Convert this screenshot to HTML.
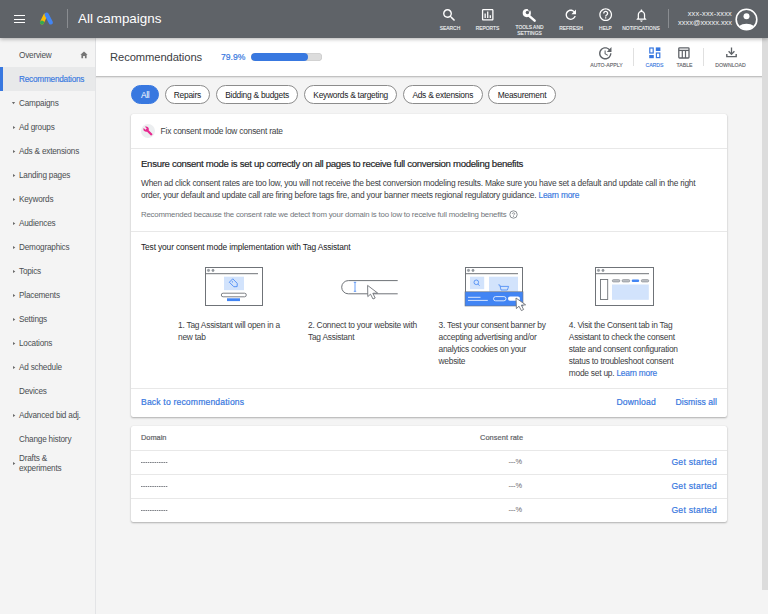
<!DOCTYPE html>
<html><head><meta charset="utf-8">
<style>
*{box-sizing:border-box;margin:0;padding:0}
html,body{width:768px;height:614px;overflow:hidden;background:#f4f4f4;font-family:"Liberation Sans",sans-serif;color:#3c4043}
.a{position:absolute;white-space:nowrap}
#hdr{position:absolute;left:0;top:0;width:768px;height:38px;background:#5f6368;z-index:5;box-shadow:0 1px 4px rgba(0,0,0,.32)}
#side{position:absolute;left:0;top:38px;width:96px;height:576px;background:#f4f4f4;border-right:1px solid #e3e4e6}
.si{position:absolute;left:19px;font-size:8.2px;letter-spacing:-0.2px;color:#4a4e52;line-height:10px;margin-top:0.8px}
.arr{position:absolute;left:12px;width:0;height:0;border-top:1.9px solid transparent;border-bottom:1.9px solid transparent;border-left:2.3px solid #6a6a6a;margin-top:0.5px}
#sub{position:absolute;left:96px;top:38px;width:666px;height:38.6px;background:#fff;border-bottom:1px solid #c2c2c2;box-shadow:0 1px 1px rgba(0,0,0,.07)}
#scroll{position:absolute;left:762px;top:38px;width:6px;height:552px;background:#dcdcdc}
.lbl{position:absolute;font-size:4.9px;font-weight:400;color:#f1f3f4;text-align:center;letter-spacing:0px;-webkit-text-stroke:0.12px currentColor}
.chip{position:absolute;top:85px;height:19px;border:1px solid #8c8c8c;border-radius:10px;font-size:8.4px;letter-spacing:-0.25px;line-height:18px;text-align:center;color:#202124;background:#fff}
.card{position:absolute;left:131px;width:596px;background:#fff;border-radius:2px;box-shadow:0 1px 2px rgba(0,0,0,.28),0 0 1px rgba(0,0,0,.12)}
.hr{position:absolute;left:0;width:596px;height:1px;background:#e8e8e8}
.t84{font-size:8.4px;color:#3c4043}
.blue{color:#1a73e8}
</style></head><body>
<div id="hdr">
 <!-- hamburger -->
 <div class="a" style="left:14px;top:15.2px;width:11px;height:1.3px;background:#fff"></div>
 <div class="a" style="left:14px;top:18.6px;width:11px;height:1.3px;background:#fff"></div>
 <div class="a" style="left:14px;top:22px;width:11px;height:1.3px;background:#fff"></div>
 <!-- logo -->
 <svg class="a" style="left:38px;top:11px" width="17" height="16" viewBox="0 0 17 16">
  <line x1="7.2" y1="4.6" x2="4" y2="11.4" stroke="#fbbc04" stroke-width="4" stroke-linecap="round"/>
  <circle cx="4" cy="11.6" r="2.1" fill="#34a853"/>
  <line x1="8.6" y1="3.6" x2="12.8" y2="11.4" stroke="#4285f4" stroke-width="4.2" stroke-linecap="round"/>
 </svg>
 <div class="a" style="left:67px;top:9px;width:1px;height:19px;background:#8a8d91"></div>
 <div class="a" style="left:78px;top:10px;font-size:13.4px;color:#fff;line-height:18px">All campaigns</div>
 <!-- search -->
 <svg class="a" style="left:441.40px;top:7.44px" width="16.46" height="16.46" viewBox="0 0 24 24"><path d="M15.5 14h-.79l-.28-.27C15.41 12.59 16 11.11 16 9.5 16 5.91 13.09 3 9.5 3S3 5.910 3 9.5 5.91 16 9.5 16c1.61 0 3.09-.59 4.23-1.57l.27.28v.79l5 4.99L20.49 19l-4.99-5zm-6 0C7.01 14 5 11.990 5 9.5S7.01 5 9.5 5 14 7.01 14 9.5 11.99 14 9.5 14z" fill="#fff"/></svg>
 <div class="lbl" style="left:436px;top:25.5px;width:28px">SEARCH</div>
 <!-- reports -->
 <svg class="a" style="left:479.90px;top:7.20px" width="15.46" height="15.46" viewBox="0 0 24 24"><path d="M19 3H5c-1.1 0-2 .9-2 2v14c0 1.1.9 2 2 2h14c1.1 0 2-.9 2-2V5c0-1.1-.9-2-2-2zm0 16H5V5h14v14zM7 10h2v7H7zm4-3h2v10h-2zm4 6h2v4h-2z" fill="#fff"/></svg>
 <div class="lbl" style="left:473px;top:25.5px;width:29px">REPORTS</div>
 <!-- tools -->
 <svg class="a" style="left:518px;top:5px" width="24" height="20" viewBox="0 0 24 20"><line x1="10.6" y1="10.4" x2="16.6" y2="15.6" stroke="#fff" stroke-width="2.5" stroke-linecap="round"/><circle cx="8.8" cy="8.1" r="4.1" fill="#fff"/><circle cx="9.4" cy="7.5" r="1.7" fill="#5f6368"/><path d="M9.6 3.4 L12.6 3.8 L11.2 7 Z" fill="#5f6368"/></svg>
 <div class="lbl" style="left:512px;top:24.6px;width:35px;line-height:6px">TOOLS AND<br>SETTINGS</div>
 <!-- refresh -->
 <svg class="a" style="left:563.20px;top:7.20px" width="15.60" height="15.60" viewBox="0 0 24 24"><path d="M17.65 6.35C16.2 4.9 14.21 4 12 4c-4.42 0-7.99 3.58-7.99 8s3.57 8 7.99 8c3.730 0 6.84-2.55 7.73-6h-2.08c-.82 2.33-3.04 4-5.65 4-3.31 0-6-2.69-6-6s2.69-6 6-6c1.66 0 3.14.69 4.22 1.78L13 11h7V4l-2.35 2.35z" fill="#fff"/></svg>
 <div class="lbl" style="left:557px;top:25.5px;width:28px">REFRESH</div>
 <!-- help -->
 <svg class="a" style="left:597.80px;top:7.20px" width="15.36" height="15.36" viewBox="0 0 24 24"><path d="M11 18h2v-2h-2v2zm1-16C6.48 2 2 6.48 2 12s4.48 10 10 10 10-4.48 10-10S17.52 2 12 2zm0 18c-4.41 0-8-3.59-8-8s3.59-8 8-8 8 3.59 8 8-3.59 8-8 8zm0-14c-2.21 0-4 1.79-4 4h2c0-1.1.9-2 2-2s2 .9 2 2c0 2-3 1.75-3 5h2c0-2.25 3-2.5 3-5 0-2.21-1.79-4-4-4z" fill="#fff"/></svg>
 <div class="lbl" style="left:595px;top:25.5px;width:21px">HELP</div>
 <!-- bell -->
 <svg class="a" style="left:633.70px;top:7.55px" width="14.88" height="14.88" viewBox="0 0 24 24"><path d="M12 22c1.1 0 2-.9 2-2h-4c0 1.1.89 2 2 2zm6-6v-5c0-3.07-1.64-5.64-4.5-6.32V4c0-.83-.67-1.5-1.5-1.5s-1.5.67-1.5 1.5v.68C7.63 5.36 6 7.920 6 11v5l-2 2v1h16v-1l-2-2zm-2 1H8v-6c0-2.48 1.51-4.5 4-4.5s4 2.02 4 4.5v6z" fill="#fff"/></svg>
 <div class="lbl" style="left:620px;top:25.5px;width:42px">NOTIFICATIONS</div>
 <div class="a" style="left:668px;top:9px;width:1px;height:19px;background:#8a8d91"></div>
 <div class="a" style="left:662px;top:8.6px;width:70px;text-align:right;font-size:7.4px;line-height:9.5px;color:#f1f3f4"><span style="letter-spacing:0.2px">xxx-xxx-xxxx</span><br>xxxx@xxxxx.xxx</div>
 <!-- avatar -->
 <svg class="a" style="left:735px;top:7.5px" width="23" height="23" viewBox="0 0 23 23"><defs><clipPath id="cc"><circle cx="11.5" cy="11.5" r="9.8"/></clipPath></defs><circle cx="11.5" cy="11.5" r="10.3" fill="none" stroke="#fff" stroke-width="1.6"/><circle cx="11.5" cy="8.2" r="3" fill="#fff"/><ellipse cx="11.5" cy="23" rx="10.5" ry="7.2" fill="#fff" clip-path="url(#cc)"/></svg>
</div>
<div id="side">
 <div class="a" style="left:0;top:28.7px;width:95px;height:24.3px;background:#e8e9ea"></div>
 <div class="a" style="left:0;top:28.7px;width:2.5px;height:24.3px;background:#3878e0"></div>
 <div class="si" style="top:12px;color:#4a4e52">Overview</div>
 <div class="si" style="top:36px;color:#3878e0;-webkit-text-stroke:0.15px currentColor">Recommendations</div>
 <div class="si" style="top:60px;color:#4a4e52">Campaigns</div>
 <svg class="a" style="left:10.5px;top:63px" width="5" height="4" viewBox="0 0 5 4"><path d="M0.9 1 L4.1 1 L2.5 3.3 Z" fill="#6a6a6a"/></svg>
 <div class="si" style="top:84px;color:#4a4e52">Ad groups</div>
 <svg class="a" style="left:11.5px;top:87.0px" width="4" height="5" viewBox="0 0 4 5"><path d="M1 0.9 L3.3 2.5 L1 4.1 Z" fill="#6a6a6a"/></svg>
 <div class="si" style="top:108px;color:#4a4e52">Ads &amp; extensions</div>
 <svg class="a" style="left:11.5px;top:111.0px" width="4" height="5" viewBox="0 0 4 5"><path d="M1 0.9 L3.3 2.5 L1 4.1 Z" fill="#6a6a6a"/></svg>
 <div class="si" style="top:132px;color:#4a4e52">Landing pages</div>
 <svg class="a" style="left:11.5px;top:135.0px" width="4" height="5" viewBox="0 0 4 5"><path d="M1 0.9 L3.3 2.5 L1 4.1 Z" fill="#6a6a6a"/></svg>
 <div class="si" style="top:156px;color:#4a4e52">Keywords</div>
 <svg class="a" style="left:11.5px;top:159.0px" width="4" height="5" viewBox="0 0 4 5"><path d="M1 0.9 L3.3 2.5 L1 4.1 Z" fill="#6a6a6a"/></svg>
 <div class="si" style="top:180px;color:#4a4e52">Audiences</div>
 <svg class="a" style="left:11.5px;top:183.0px" width="4" height="5" viewBox="0 0 4 5"><path d="M1 0.9 L3.3 2.5 L1 4.1 Z" fill="#6a6a6a"/></svg>
 <div class="si" style="top:204px;color:#4a4e52">Demographics</div>
 <svg class="a" style="left:11.5px;top:207.0px" width="4" height="5" viewBox="0 0 4 5"><path d="M1 0.9 L3.3 2.5 L1 4.1 Z" fill="#6a6a6a"/></svg>
 <div class="si" style="top:228px;color:#4a4e52">Topics</div>
 <svg class="a" style="left:11.5px;top:231.0px" width="4" height="5" viewBox="0 0 4 5"><path d="M1 0.9 L3.3 2.5 L1 4.1 Z" fill="#6a6a6a"/></svg>
 <div class="si" style="top:252px;color:#4a4e52">Placements</div>
 <svg class="a" style="left:11.5px;top:255.0px" width="4" height="5" viewBox="0 0 4 5"><path d="M1 0.9 L3.3 2.5 L1 4.1 Z" fill="#6a6a6a"/></svg>
 <div class="si" style="top:276px;color:#4a4e52">Settings</div>
 <svg class="a" style="left:11.5px;top:279.0px" width="4" height="5" viewBox="0 0 4 5"><path d="M1 0.9 L3.3 2.5 L1 4.1 Z" fill="#6a6a6a"/></svg>
 <div class="si" style="top:300px;color:#4a4e52">Locations</div>
 <svg class="a" style="left:11.5px;top:303.0px" width="4" height="5" viewBox="0 0 4 5"><path d="M1 0.9 L3.3 2.5 L1 4.1 Z" fill="#6a6a6a"/></svg>
 <div class="si" style="top:324px;color:#4a4e52">Ad schedule</div>
 <svg class="a" style="left:11.5px;top:327.0px" width="4" height="5" viewBox="0 0 4 5"><path d="M1 0.9 L3.3 2.5 L1 4.1 Z" fill="#6a6a6a"/></svg>
 <div class="si" style="top:348px;color:#4a4e52">Devices</div>
 <div class="si" style="top:372px;color:#4a4e52">Advanced bid adj.</div>
 <svg class="a" style="left:11.5px;top:375.0px" width="4" height="5" viewBox="0 0 4 5"><path d="M1 0.9 L3.3 2.5 L1 4.1 Z" fill="#6a6a6a"/></svg>
 <div class="si" style="top:396px;color:#4a4e52">Change history</div>
 <div class="si" style="top:415px">Drafts &amp;<br>experiments</div>
 <svg class="a" style="left:11.5px;top:423.0px" width="4" height="5" viewBox="0 0 4 5"><path d="M1 0.9 L3.3 2.5 L1 4.1 Z" fill="#6a6a6a"/></svg>
 <svg class="a" style="left:80px;top:13px" width="8" height="8" viewBox="0 0 8 8"><path d="M4 0.6 L7.6 3.8 L6.6 3.8 L6.6 7.2 L4.9 7.2 L4.9 5 L3.1 5 L3.1 7.2 L1.4 7.2 L1.4 3.8 L0.4 3.8 Z" fill="#757575"/></svg>
</div>
<div id="sub">
 <div class="a" style="left:14px;top:12px;font-size:11.2px;line-height:14px;color:#3c4043;letter-spacing:-0.08px">Recommendations</div>
 <div class="a" style="left:125px;top:13.7px;font-size:8.6px;line-height:10px;color:#3878e0;font-weight:400;letter-spacing:0px;-webkit-text-stroke:0.2px currentColor;">79.9%</div>
 <div class="a" style="left:154.5px;top:15px;width:71px;height:8px;border-radius:4px;background:#dcdcdc;box-shadow:inset 0 0 0 0.6px #c8c8c8;overflow:hidden"><div style="width:57px;height:8px;background:#3878e0;border-radius:4px"></div></div>
 <!-- auto-apply -->
 <svg class="a" style="left:501.40px;top:6.90px" width="16.56" height="16.56" viewBox="0 0 24 24"><path d="M21 10.12h-6.78l2.74-2.82c-2.73-2.7-7.15-2.8-9.88-.1-2.73 2.71-2.73 7.08 0 9.79s7.15 2.71 9.88 0C18.32 15.65 19 14.08 19 12.1h2c0 1.98-.88 4.55-2.64 6.29-3.51 3.48-9.21 3.48-12.72 0-3.5-3.47-3.53-9.11-.02-12.58s9.14-3.47 12.65 0L21 3v7.12zM12.5 8v4.25l3.5 2.08-.72 1.21L11 13V8h1.5z" fill="#5f6368"/></svg>
 <div class="lbl" style="left:492px;top:23.8px;width:37px;color:#5f6368;font-weight:400;font-size:5.2px">AUTO-APPLY</div>
 <div class="a" style="left:537px;top:9.5px;width:1px;height:18.5px;background:#e0e0e0"></div>
 <!-- cards -->
 <svg class="a" style="left:552.5px;top:9px" width="12" height="12" viewBox="0 0 12 12" fill="#3878e0"><rect x="0.2" y="0.4" width="4.6" height="6.2"/><rect x="6.8" y="0.4" width="4.6" height="3.6"/><rect x="0.2" y="8" width="4.6" height="3.2"/><rect x="6.8" y="5.4" width="4.6" height="5.8"/><rect x="1.4" y="1.6" width="2.2" height="3.8" fill="#fff"/><rect x="8" y="6.6" width="2.2" height="3.4" fill="#fff"/></svg>
 <div class="lbl" style="left:547px;top:23.8px;width:23px;color:#3878e0;font-weight:400;font-size:5.2px">CARDS</div>
 <!-- table -->
 <svg class="a" style="left:582px;top:9px" width="12" height="12" viewBox="0 0 12 12"><rect x="0.8" y="0.8" width="10.2" height="10.2" rx="0.8" fill="none" stroke="#5f6368" stroke-width="1.3"/><line x1="0.8" y1="3.4" x2="11" y2="3.4" stroke="#5f6368" stroke-width="1.3"/><line x1="4.3" y1="3.4" x2="4.3" y2="11" stroke="#5f6368" stroke-width="1.2"/><line x1="7.5" y1="3.4" x2="7.5" y2="11" stroke="#5f6368" stroke-width="1.2"/></svg>
 <div class="lbl" style="left:578px;top:23.8px;width:21px;color:#5f6368;font-weight:400;font-size:5.2px">TABLE</div>
 <div class="a" style="left:607px;top:9.5px;width:1px;height:18.5px;background:#e0e0e0"></div>
 <!-- download -->
 <svg class="a" style="left:629.5px;top:9px" width="11" height="11" viewBox="0 0 11 11"><line x1="5.5" y1="0.5" x2="5.5" y2="6.6" stroke="#5f6368" stroke-width="1.3"/><path d="M2.6 4.2 L5.5 7.2 L8.4 4.2" fill="none" stroke="#5f6368" stroke-width="1.3"/><path d="M0.8 7 L0.8 9.6 L10.2 9.6 L10.2 7" fill="none" stroke="#5f6368" stroke-width="1.4"/></svg>
 <div class="lbl" style="left:617px;top:23.8px;width:35px;color:#5f6368;font-weight:400;font-size:5.2px">DOWNLOAD</div>
</div>
<div id="scroll"></div>
<div class="chip" style="left:131px;width:28.4px;background:#3878e0;border-color:#3878e0;color:#fff">All</div>
<div class="chip" style="left:164.75px;width:45.25px">Repairs</div>
<div class="chip" style="left:215.7px;width:82.8px">Bidding &amp; budgets</div>
<div class="chip" style="left:304px;width:93.3px">Keywords &amp; targeting</div>
<div class="chip" style="left:402.8px;width:79.9px">Ads &amp; extensions</div>
<div class="chip" style="left:488px;width:68px">Measurement</div>
<div class="card" style="top:114px;height:303px">
 <svg class="a" style="left:10px;top:9.8px" width="14" height="14" viewBox="0 0 14 14"><circle cx="7" cy="7" r="7" fill="#eceef0"/></svg><svg class="a" style="left:12.4px;top:11.6px" width="10" height="10" viewBox="0 0 24 24"><path d="M22.7 19l-9.1-9.1c.9-2.3.4-5-1.5-6.9-2-2-5-2.4-7.4-1.3L9 6 6 9 1.6 4.7C.4 7.1.9 10.1 2.9 12.1c1.9 1.9 4.6 2.4 6.9 1.5l9.1 9.1c.4.4 1 .4 1.4 0l2.3-2.3c.5-.4.5-1.1.1-1.4z" fill="#e8288f"/></svg>
 <div class="a" style="left:29.6px;top:11.0px;font-size:8.4px;line-height:12px;color:#3c4043;font-weight:400;letter-spacing:-0.22px;">Fix consent mode low consent rate</div>
 <div class="hr" style="top:34px"></div>
 <div class="a" style="left:10px;top:43.5px;font-size:9.6px;line-height:12px;color:#202124;font-weight:400;letter-spacing:-0.30px;-webkit-text-stroke:0.16px currentColor;">Ensure consent mode is set up correctly on all pages to receive full conversion modeling benefits</div>
 <div class="a" style="left:10px;top:63.0px;font-size:8.4px;line-height:12px;color:#3c4043;font-weight:400;letter-spacing:-0.22px;">When ad click consent rates are too low, you will not receive the best conversion modeling results. Make sure you have set a default and update call in the right</div>
 <div class="a" style="left:10px;top:75.0px;font-size:8.4px;line-height:12px;color:#3c4043;font-weight:400;letter-spacing:-0.22px;">order, your default and update call are firing before tags fire, and your banner meets regional regulatory guidance. <span style="color:#3878e0;-webkit-text-stroke:0.15px currentColor">Learn more</span></div>
 <div class="a" style="left:10px;top:95.6px;font-size:7.8px;line-height:10px;color:#70757a;font-weight:400;letter-spacing:-0.2px;">Recommended because the consent rate we detect from your domain is too low to receive full modeling benefits</div>
 <svg class="a" style="left:377.5px;top:96px" width="9" height="9" viewBox="0 0 9 9"><circle cx="4.5" cy="4.5" r="3.7" fill="none" stroke="#70757a" stroke-width="0.8"/><path d="M3.3 3.7 C3.3 2.5 5.7 2.5 5.7 3.7 C5.7 4.6 4.5 4.5 4.5 5.5" fill="none" stroke="#70757a" stroke-width="0.8"/><rect x="4.1" y="6" width="0.8" height="0.8" fill="#70757a"/></svg>
 <div class="hr" style="top:117px"></div>
 <div class="a" style="left:10px;top:127.2px;font-size:8.4px;line-height:12px;color:#202124;font-weight:400;letter-spacing:-0.13px;">Test your consent mode implementation with Tag Assistant</div>
<svg class="a" style="left:0;top:0" width="596" height="303" viewBox="131 114 596 303"><rect x="205.5" y="267.5" width="57" height="38" fill="#fff" stroke="#6f7378" stroke-width="1"/><circle cx="208.5" cy="270.4" r="1.15" fill="#9aa0a6" stroke="#70757a" stroke-width="0.5"/><circle cx="213" cy="270.4" r="1.15" fill="#9aa0a6" stroke="#70757a" stroke-width="0.5"/><line x1="205" y1="273.7" x2="258" y2="273.7" stroke="#6f7378" stroke-width="1"/><rect x="224" y="276.7" width="20" height="13.5" fill="#d2e3fc"/><g transform="translate(234,283.5) rotate(-45)"><path d="M-2.4 -4.2 L2.4 -4.2 L2.4 2.2 L0 4.4 L-2.4 2.2 Z" fill="none" stroke="#4285f4" stroke-width="0.8"/><circle cx="0" cy="-2.3" r="0.6" fill="#4285f4"/></g><rect x="221.3" y="293.2" width="25" height="3.6" rx="1.8" fill="none" stroke="#6f7378" stroke-width="0.9"/><rect x="227" y="298.3" width="13" height="2.8" fill="#4285f4"/><path d="M397.7 280.6 L348.3 280.6 A6.6 6.6 0 0 0 348.3 293.8 L397.7 293.8" fill="none" stroke="#6f7378" stroke-width="1"/><path d="M353.8 282.3 L356.2 282.3 M355 282.3 L355 291.3 M353.8 291.3 L356.2 291.3" fill="none" stroke="#4285f4" stroke-width="0.8"/><path d="M367.6 285.4 L367.8 296.6 L370.5 294.2 L373 299 L375.2 298 L372.8 293.3 L377.6 293 Z" fill="#fff" stroke="#6f7378" stroke-width="0.9" stroke-linejoin="round"/><rect x="465.5" y="267.5" width="57" height="38" fill="#fff" stroke="#6f7378" stroke-width="1"/><circle cx="468.5" cy="270.4" r="1.15" fill="#9aa0a6" stroke="#70757a" stroke-width="0.5"/><circle cx="473" cy="270.4" r="1.15" fill="#9aa0a6" stroke="#70757a" stroke-width="0.5"/><line x1="465" y1="273.7" x2="518" y2="273.7" stroke="#6f7378" stroke-width="1"/><rect x="470" y="276.7" width="14.2" height="12.5" fill="#d2e3fc"/><circle cx="476.3" cy="282.3" r="2.3" fill="none" stroke="#4285f4" stroke-width="0.8"/><line x1="477.9" y1="284" x2="479.6" y2="285.8" stroke="#4285f4" stroke-width="0.8"/><rect x="489" y="276.7" width="29" height="15" fill="#d2e3fc"/><path d="M498.4 284.8 L499.8 285 L501 290 L507.4 290 L508.6 286.4 L500.2 286.4" fill="none" stroke="#4285f4" stroke-width="0.8"/><rect x="465" y="291.8" width="58" height="14.2" fill="#4285f4" stroke="#6f7378" stroke-width="0.6"/><line x1="468" y1="297.3" x2="480.5" y2="297.3" stroke="#fff" stroke-width="0.8"/><line x1="468" y1="300.4" x2="487.8" y2="300.4" stroke="#fff" stroke-width="0.8"/><rect x="493.5" y="296.6" width="12.5" height="4.2" rx="2.1" fill="none" stroke="#fff" stroke-width="0.8"/><rect x="508" y="296.6" width="12" height="4.2" rx="2.1" fill="#fff"/><path d="M516 298 L516.4 308.6 L519 306.2 L521.4 310.6 L523.6 309.5 L521.3 305.2 L525.6 304.8 Z" fill="#fff" stroke="#6f7378" stroke-width="0.9" stroke-linejoin="round"/><rect x="595.5" y="267.5" width="58" height="38" fill="#fff" stroke="#6f7378" stroke-width="1"/><circle cx="598.5" cy="270.4" r="1.15" fill="#9aa0a6" stroke="#70757a" stroke-width="0.5"/><circle cx="603" cy="270.4" r="1.15" fill="#9aa0a6" stroke="#70757a" stroke-width="0.5"/><line x1="595" y1="273.7" x2="649" y2="273.7" stroke="#6f7378" stroke-width="1"/><rect x="600.5" y="279.5" width="7.2" height="20" fill="none" stroke="#6f7378" stroke-width="0.9"/><rect x="612.3" y="279.6" width="7.600000000000023" height="2.4" rx="1.2" fill="#bdc1c6" stroke="#6f7378" stroke-width="0.5"/><rect x="622" y="279.6" width="7.7999999999999545" height="2.4" rx="1.2" fill="#bdc1c6" stroke="#6f7378" stroke-width="0.5"/><rect x="631.7" y="279.6" width="7.5" height="2.4" rx="1.2" fill="#4285f4"/><rect x="641.25" y="279.6" width="7.5" height="2.4" rx="1.2" fill="#bdc1c6" stroke="#6f7378" stroke-width="0.5"/><rect x="612" y="284.5" width="36.8" height="15.3" fill="#d2e3fc"/></svg>
 <div class="a" style="left:47px;top:204.5px;font-size:8.4px;line-height:12px;color:#3c4043;letter-spacing:-0.24px">1. Tag Assistant will open in a<br>new tab</div>
 <div class="a" style="left:177px;top:204.5px;font-size:8.4px;line-height:12px;color:#3c4043;letter-spacing:-0.24px">2. Connect to your website with<br>Tag Assistant</div>
 <div class="a" style="left:307.5px;top:204.5px;font-size:8.4px;line-height:12px;color:#3c4043;letter-spacing:-0.24px">3. Test your consent banner by<br>accepting advertising and/or<br>analytics cookies on your<br>website</div>
 <div class="a" style="left:437.79999999999995px;top:204.5px;font-size:8.4px;line-height:12px;color:#3c4043;letter-spacing:-0.24px">4. Visit the Consent tab in Tag<br>Assistant to check the consent<br>state and consent configuration<br>status to troubleshoot consent<br>mode set up. <span style="color:#3878e0;-webkit-text-stroke:0.15px currentColor">Learn more</span></div>
 <div class="hr" style="top:274px"></div>
 <div class="a" style="left:10px;top:282.3px;font-size:8.6px;line-height:12px;color:#3878e0;font-weight:400;letter-spacing:0.17px;-webkit-text-stroke:0.2px currentColor;">Back to recommendations</div>
 <div class="a" style="left:485.4px;top:282.3px;font-size:8.6px;line-height:12px;color:#3878e0;font-weight:400;letter-spacing:0.17px;-webkit-text-stroke:0.2px currentColor;">Download</div>
 <div class="a" style="left:544.6px;top:282.3px;font-size:8.6px;line-height:12px;color:#3878e0;font-weight:400;letter-spacing:0.03px;-webkit-text-stroke:0.2px currentColor;">Dismiss all</div>
</div>
<div class="card" style="top:425.6px;height:96.4px">
 <div class="a" style="left:10px;top:6.70px;font-size:7.4px;line-height:12px;color:#5f6368;font-weight:400;letter-spacing:0px;-webkit-text-stroke:0.2px currentColor;">Domain</div>
 <div class="a" style="left:349px;top:6.70px;font-size:7.4px;line-height:12px;color:#5f6368;font-weight:400;letter-spacing:0.07px;-webkit-text-stroke:0.2px currentColor;">Consent rate</div>
 <div class="hr" style="top:24.40px"></div>
 <div class="hr" style="top:48.60px"></div>
 <div class="hr" style="top:72.60px"></div>
 <svg class="a" style="left:10px;top:35.60px" width="28" height="3" viewBox="0 0 28 3"><line x1="0" y1="1.5" x2="27" y2="1.5" stroke="#6f7378" stroke-width="0.9" stroke-dasharray="1.6 0.65"/></svg>
 <div class="a" style="left:377.5px;top:30.60px;font-size:7.4px;line-height:12px;color:#5f6368;font-weight:400;letter-spacing:-0.15px;">---%</div>
 <div class="a" style="left:540.4px;top:30.60px;font-size:8.6px;line-height:12px;color:#3878e0;font-weight:400;letter-spacing:0.28px;-webkit-text-stroke:0.2px currentColor;">Get started</div>
 <svg class="a" style="left:10px;top:59.60px" width="28" height="3" viewBox="0 0 28 3"><line x1="0" y1="1.5" x2="27" y2="1.5" stroke="#6f7378" stroke-width="0.9" stroke-dasharray="1.6 0.65"/></svg>
 <div class="a" style="left:377.5px;top:54.60px;font-size:7.4px;line-height:12px;color:#5f6368;font-weight:400;letter-spacing:-0.15px;">---%</div>
 <div class="a" style="left:540.4px;top:54.60px;font-size:8.6px;line-height:12px;color:#3878e0;font-weight:400;letter-spacing:0.28px;-webkit-text-stroke:0.2px currentColor;">Get started</div>
 <svg class="a" style="left:10px;top:83.60px" width="28" height="3" viewBox="0 0 28 3"><line x1="0" y1="1.5" x2="27" y2="1.5" stroke="#6f7378" stroke-width="0.9" stroke-dasharray="1.6 0.65"/></svg>
 <div class="a" style="left:377.5px;top:78.60px;font-size:7.4px;line-height:12px;color:#5f6368;font-weight:400;letter-spacing:-0.15px;">---%</div>
 <div class="a" style="left:540.4px;top:78.60px;font-size:8.6px;line-height:12px;color:#3878e0;font-weight:400;letter-spacing:0.28px;-webkit-text-stroke:0.2px currentColor;">Get started</div>
</div>

</body></html>
